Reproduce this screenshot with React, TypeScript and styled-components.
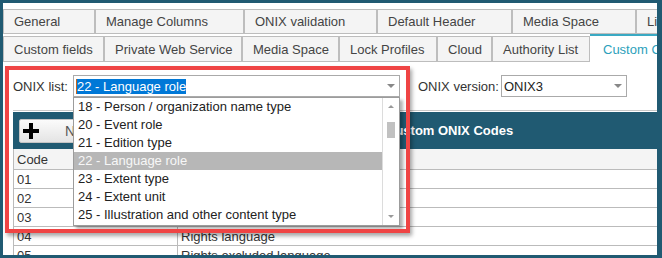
import React from 'react';
import styled, { createGlobalStyle } from 'styled-components';

const GlobalStyle = createGlobalStyle`
  body {
    margin: 0;
    background: #fff;
  }
`;

const Frame = styled.div`
  position: relative;
  box-sizing: border-box;
  width: 662px;
  height: 258px;
  border: 3px solid #205a72;
  border-right-width: 5px;
  background: #fff;
  overflow: hidden;
  font-family: "Liberation Sans", Arial, sans-serif;
  font-size: 13px;
  color: #333;
`;

const TabStrip = styled.div`
  padding-top: 6px;
`;

const TabRow = styled.div`
  display: flex;
  align-items: flex-end;
`;

const Tab = styled.div<{ $w: number; $h: number }>`
  flex: 0 0 auto;
  box-sizing: border-box;
  width: ${p => p.$w}px;
  height: ${p => p.$h}px;
  padding-left: 10px;
  display: flex;
  align-items: center;
  background: #f4f4f4;
  border: 1px solid #bdbdbd;
  color: #444;
  white-space: nowrap;
  overflow: hidden;
`;

const ActiveTab = styled(Tab)`
  background: #fff;
  border: none;
  border-top: 2px solid #3aa9c3;
  padding-left: 13px;
  color: #2c9fbb;
`;

const Content = styled.div`
  padding: 13px 0 0 10px;
`;

const FormRow = styled.div`
  display: flex;
  align-items: center;
`;

const Label = styled.span<{ $ml?: number; $w: number }>`
  width: ${p => p.$w}px;
  margin-left: ${p => p.$ml ?? 0}px;
  white-space: nowrap;
`;

const SelectBox = styled.div<{ $w: number }>`
  position: relative;
  box-sizing: border-box;
  width: ${p => p.$w}px;
  height: 22px;
  padding-left: 2px;
  display: flex;
  align-items: center;
  border: 1px solid #aaa;
  background: #fff;
  color: #222;
`;

const Arrow = styled.span`
  position: absolute;
  right: 4px;
  top: 8px;
  width: 0;
  height: 0;
  border-left: 4px solid transparent;
  border-right: 4px solid transparent;
  border-top: 4px solid #888;
`;

const Selected = styled.span`
  line-height: 15px;
  background: #0078d7;
  color: #fff;
  border-left: 1px solid #c8641c;
`;

const Panel = styled.div`
  margin-top: 13px;
  border-top: 1px solid #c8c8c8;
  padding-top: 1px;
`;

const Band = styled.div`
  height: 37px;
  display: flex;
  align-items: center;
  padding-left: 6px;
  background: #205a72;
`;

const NewButton = styled.div`
  box-sizing: border-box;
  width: 130px;
  height: 24px;
  padding-left: 3px;
  display: flex;
  align-items: center;
  background: linear-gradient(#fbfbfb, #e4e4e4);
  border: 1px solid #c4c4c4;
  border-radius: 2px;
  color: #555;
  font-size: 14px;
`;

const ButtonText = styled.span`
  margin-left: 26px;
`;

const Title = styled.span`
  margin-left: 237px;
  color: #fff;
  font-weight: bold;
  white-space: nowrap;
`;

const Row = styled.div<{ $head?: boolean }>`
  display: grid;
  grid-template-columns: 164px 1fr;
  height: ${p => (p.$head ? 20 : 18)}px;
  border-bottom: 1px solid #bbb;
  background: ${p => (p.$head ? '#f4f4f4' : '#fff')};
`;

const Cell = styled.div`
  border-left: 1px solid #bbb;
  padding-left: 3px;
  display: flex;
  align-items: center;
  white-space: nowrap;
  overflow: hidden;
`;

const Dropdown = styled.div`
  position: absolute;
  left: 70px;
  top: 94px;
  box-sizing: border-box;
  width: 327px;
  height: 129px;
  display: flex;
  border: 1px solid #9c9c9c;
  background: #fff;
  box-shadow: 3px 3px 3px rgba(0, 0, 0, 0.3);
  z-index: 2;
`;

const OptionList = styled.div`
  flex: 1;
  overflow: hidden;
`;

const Option = styled.div<{ $active?: boolean }>`
  height: 18px;
  line-height: 18px;
  padding-left: 4px;
  white-space: nowrap;
  color: ${p => (p.$active ? '#f7f7f7' : '#222')};
  background: ${p => (p.$active ? '#b7b7b7' : 'transparent')};
`;

const Scrollbar = styled.div`
  width: 16px;
  border-left: 1px solid #dcdcdc;
  display: flex;
  flex-direction: column;
  align-items: center;
`;

const ScrollButton = styled.div<{ $up?: boolean }>`
  height: 17px;
  width: 100%;
  display: flex;
  align-items: center;
  justify-content: center;
  &::after {
    content: '';
    width: 0;
    height: 0;
    border-left: 3px solid transparent;
    border-right: 3px solid transparent;
    ${p => (p.$up ? 'border-bottom: 3px solid #999;' : 'border-top: 3px solid #999;')}
  }
`;

const Thumb = styled.div`
  width: 8px;
  height: 16px;
  margin-top: 7px;
  background: #c1c1c1;
`;

const Spacer = styled.div`
  flex: 1;
`;

const Highlight = styled.div`
  position: absolute;
  left: 2px;
  top: 63px;
  box-sizing: border-box;
  width: 405px;
  height: 167px;
  border: 4px solid #ef4444;
  box-shadow: 2px 3px 4px rgba(0, 0, 0, 0.35);
  z-index: 3;
`;

const PlusIcon = () => (
  <svg width="16" height="16" viewBox="0 0 16 16">
    <rect x="6" y="0" width="4" height="16" fill="#000" />
    <rect x="0" y="6" width="16" height="4" fill="#000" />
  </svg>
);

const topTabs: [string, number][] = [
  ['General', 92],
  ['Manage Columns', 149],
  ['ONIX validation', 133],
  ['Default Header', 135],
  ['Media Space', 124],
  ['Lists', 80],
];

const subTabs: [string, number][] = [
  ['Custom fields', 101],
  ['Private Web Service', 138],
  ['Media Space', 97],
  ['Lock Profiles', 98],
  ['Cloud', 55],
  ['Authority List', 98],
];

const options = [
  '18 - Person / organization name type',
  '20 - Event role',
  '21 - Edition type',
  '22 - Language role',
  '23 - Extent type',
  '24 - Extent unit',
  '25 - Illustration and other content type',
];

const codes = [
  ['01', 'Language of text'],
  ['02', 'Original language'],
  ['03', 'Language of abstracts'],
  ['04', 'Rights language'],
  ['05', 'Rights excluded language'],
];

const App: React.FC = () => {
  return (
    <Frame>
      <GlobalStyle />
      <TabStrip>
        <TabRow>
          {topTabs.map(([t, w]) => (
            <Tab key={t} $w={w} $h={25}>{t}</Tab>
          ))}
        </TabRow>
        <TabRow>
          {subTabs.map(([t, w]) => (
            <Tab key={t} $w={w} $h={26}>{t}</Tab>
          ))}
          <ActiveTab $w={80} $h={28}>Custom ONIX Codes</ActiveTab>
        </TabRow>
      </TabStrip>
      <Content>
        <FormRow>
          <Label $w={60}>ONIX list:</Label>
          <SelectBox $w={327}>
            <Selected>22 - Language role</Selected>
            <Arrow />
          </SelectBox>
          <Label $w={83} $ml={18}>ONIX version:</Label>
          <SelectBox $w={126}>
            ONIX3
            <Arrow />
          </SelectBox>
        </FormRow>
        <Panel>
          <Band>
            <NewButton>
              <PlusIcon />
              <ButtonText>New</ButtonText>
            </NewButton>
            <Title>Custom ONIX Codes</Title>
          </Band>
          <Row $head>
            <Cell>Code</Cell>
            <Cell>Description</Cell>
          </Row>
          {codes.map(([c, d]) => (
            <Row key={c}>
              <Cell>{c}</Cell>
              <Cell>{d}</Cell>
            </Row>
          ))}
        </Panel>
      </Content>
      <Dropdown>
        <OptionList>
          {options.map(o => (
            <Option key={o} $active={o.startsWith('22')}>{o}</Option>
          ))}
        </OptionList>
        <Scrollbar>
          <ScrollButton $up />
          <Thumb />
          <Spacer />
          <ScrollButton />
        </Scrollbar>
      </Dropdown>
      <Highlight />
    </Frame>
  );
};

export default App;
